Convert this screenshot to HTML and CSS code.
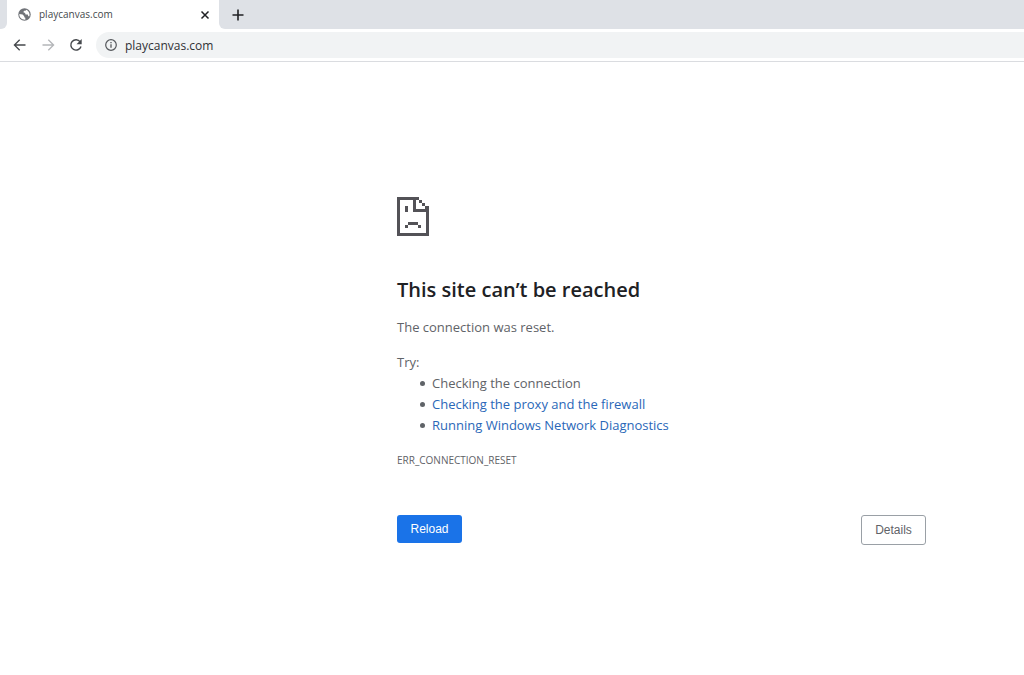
FILE: index.html
```html
<!DOCTYPE html>
<html lang="en">
  <head>
    <meta charset="UTF-8" />
    <meta name="viewport" content="width=device-width, initial-scale=1.0" />
    <title>playcanvas.com</title>
    <link rel="stylesheet" href="styles.css">
  </head>
  <body>
    <header class="browser">
      <div class="tab-strip">
        <div class="strip-edge"></div>
        <div class="tab">
          <svg class="globe" viewBox="0 0 24 24" aria-hidden="true">
            <circle cx="12" cy="12" r="11.5" fill="#707378" />
            <path d="M2.500 11l6 1 3 3v2l2 1v3.500C7 22 2 17 2.500 11zM15 3l-1 2h-3l-1 3 3 1 1 3h4l1 3h2c1.500-5-1-10-6-12z" fill="#fff" />
          </svg>
          <span class="tab-title">playcanvas.com</span>
          <button class="icon-button close" aria-label="Close tab">
            <svg viewBox="0 0 10 10"><path d="M1.500 1.500l7 7M8.500 1.500l-7 7" stroke="#202124" stroke-width="1.500" /></svg>
          </button>
        </div>
        <div class="strip-rest">
          <button class="icon-button new-tab" aria-label="New tab">
            <svg viewBox="0 0 12 12"><path d="M6 .5v11M.5 6h11" stroke="#202124" stroke-width="1.600" /></svg>
          </button>
        </div>
      </div>
      <div class="toolbar">
        <div class="nav">
          <button class="icon-button" aria-label="Back">
            <svg viewBox="0 0 14 14"><path d="M12.500 7H1.500M6.700 1.700L1.400 7l5.300 5.300" fill="none" stroke="#45484c" stroke-width="1.300" /></svg>
          </button>
          <button class="icon-button" aria-label="Forward" disabled>
            <svg viewBox="0 0 14 14"><path d="M1.500 7h11M7.300 1.700L12.600 7l-5.300 5.300" fill="none" stroke="#b4b6b9" stroke-width="1.300" /></svg>
          </button>
          <button class="icon-button" aria-label="Reload page">
            <svg viewBox="0 0 14 14"><path d="M12 8.500A5.200 5.200 0 1 1 11.200 3.800" fill="none" stroke="#45484c" stroke-width="1.400" /><path d="M12.700 1v5.200H7.500z" fill="#45484c" /></svg>
          </button>
        </div>
        <div class="address-bar">
          <svg class="info" viewBox="0 0 12 12" aria-hidden="true">
            <circle cx="6" cy="6" r="5.300" fill="none" stroke="#55585c" stroke-width="1.200" />
            <path d="M6 5.200v3.600M6 3v1.300" stroke="#55585c" stroke-width="1.300" />
          </svg>
          <input type="text" class="address" aria-label="Address" value="playcanvas.com" />
        </div>
      </div>
    </header>

    <main class="error-page">
      <svg class="sad-page" viewBox="0 0 96 117" aria-hidden="true">
        <path fill="#535257" d="M0 0h66v9h-9v27h39v81H0zM9 9v99h78V45H48V9zM66 9h9v9h-9zM75 18h9v9h-9zM84 27h12v9H84zM24 27h9v18h-9zM33 75h30v9H33zM24 84h9v9h-9zM63 84h9v9h-9z" fill-rule="evenodd" />
      </svg>

      <h1>This site can’t be reached</h1>
      <p class="summary">The connection was reset.</p>

      <div class="suggestions">
        <p>Try:</p>
        <ul>
          <li>Checking the connection</li>
          <li><a href="#proxy">Checking the proxy and the firewall</a></li>
          <li><a href="#diagnostics">Running Windows Network Diagnostics</a></li>
        </ul>
      </div>

      <p class="error-code">ERR_CONNECTION_RESET</p>

      <div class="buttons">
        <button class="reload">Reload</button>
        <button class="details">Details</button>
      </div>
    </main>
  </body>
</html>
```
FILE: styles.css
```css
* {
  box-sizing: border-box;
}

body {
  margin: 0;
  background-color: #fff;
  color: #5f6368;
  font-family: 'Open Sans', 'Noto Sans', sans-serif;
  font-size: 13px;
  line-height: 21px;
}

button {
  font-family: 'Liberation Sans', Arial, sans-serif;
  cursor: pointer;
}

/* Browser chrome */
.browser {
  border-bottom: 1px solid #dadce0;
}

.tab-strip {
  display: flex;
  height: 29px;
  background-color: #fff;
}

.strip-edge {
  width: 7px;
  background-color: #dee1e6;
  border-bottom-right-radius: 6px;
}

.tab {
  display: flex;
  align-items: center;
  width: 212px;
  padding: 0 8px 0 11px;
  background-color: #fff;
}

.globe {
  width: 13px;
  height: 13px;
}

.tab-title {
  flex: 1;
  margin-left: 8px;
  color: #45484c;
  font-size: 10px;
}

.strip-rest {
  display: flex;
  flex: 1;
  align-items: center;
  padding-left: 12px;
  background-color: #dee1e6;
  border-bottom-left-radius: 6px;
}

.icon-button {
  display: flex;
  padding: 0;
  border: none;
  background: none;
}

.icon-button svg {
  width: 14px;
  height: 14px;
}

.close svg {
  width: 10px;
  height: 10px;
  margin: 1px;
}

.new-tab svg {
  width: 12px;
  height: 12px;
  margin: 1px;
}

.toolbar {
  display: flex;
  align-items: center;
  height: 32px;
  padding-left: 13px;
}

.nav {
  display: flex;
  gap: 14px;
  width: 83px;
}

.address-bar {
  display: flex;
  flex: 1;
  align-items: center;
  height: 26px;
  padding-left: 9px;
  border-radius: 13px 0 0 13px;
  background-color: #f1f3f4;
}

.info {
  width: 12px;
  height: 12px;
}

.address {
  flex: 1;
  margin-left: 8px;
  padding: 0;
  border: none;
  outline: none;
  background: none;
  color: #303134;
  font: inherit;
  font-size: 12px;
}

/* Error page */
.error-page {
  max-width: 529px;
  margin: 135px 98px 0 auto;
}

.sad-page {
  display: block;
  width: 32px;
  height: 39px;
}

h1 {
  margin: 39px 0 0;
  color: #202124;
  font-size: 20px;
  font-weight: 600;
  line-height: 30px;
}

p {
  margin: 0;
}

.summary {
  margin-top: 12px;
}

.suggestions {
  margin-top: 14px;
}

ul {
  margin: 0;
  padding-left: 23px;
  list-style: none;
}

li {
  display: flex;
  align-items: center;
}

li::before {
  content: '';
  width: 5px;
  height: 5px;
  margin-right: 7px;
  border-radius: 50%;
  background-color: #5f6368;
}

a {
  color: #2a67b8;
  text-decoration: none;
}

.error-code {
  margin-top: 14px;
  font-size: 10px;
}

.buttons {
  display: flex;
  align-items: flex-start;
  justify-content: space-between;
  margin-top: 44px;
}

.reload,
.details {
  width: 65px;
  height: 28px;
  padding: 0;
  border: none;
  border-radius: 3px;
  font-size: 12px;
}

.reload {
  background-color: #1a73e8;
  color: #fff;
}

.details {
  height: 30px;
  border: 1px solid #9aa0a6;
  background-color: #fff;
  color: #5f6368;
}
```
